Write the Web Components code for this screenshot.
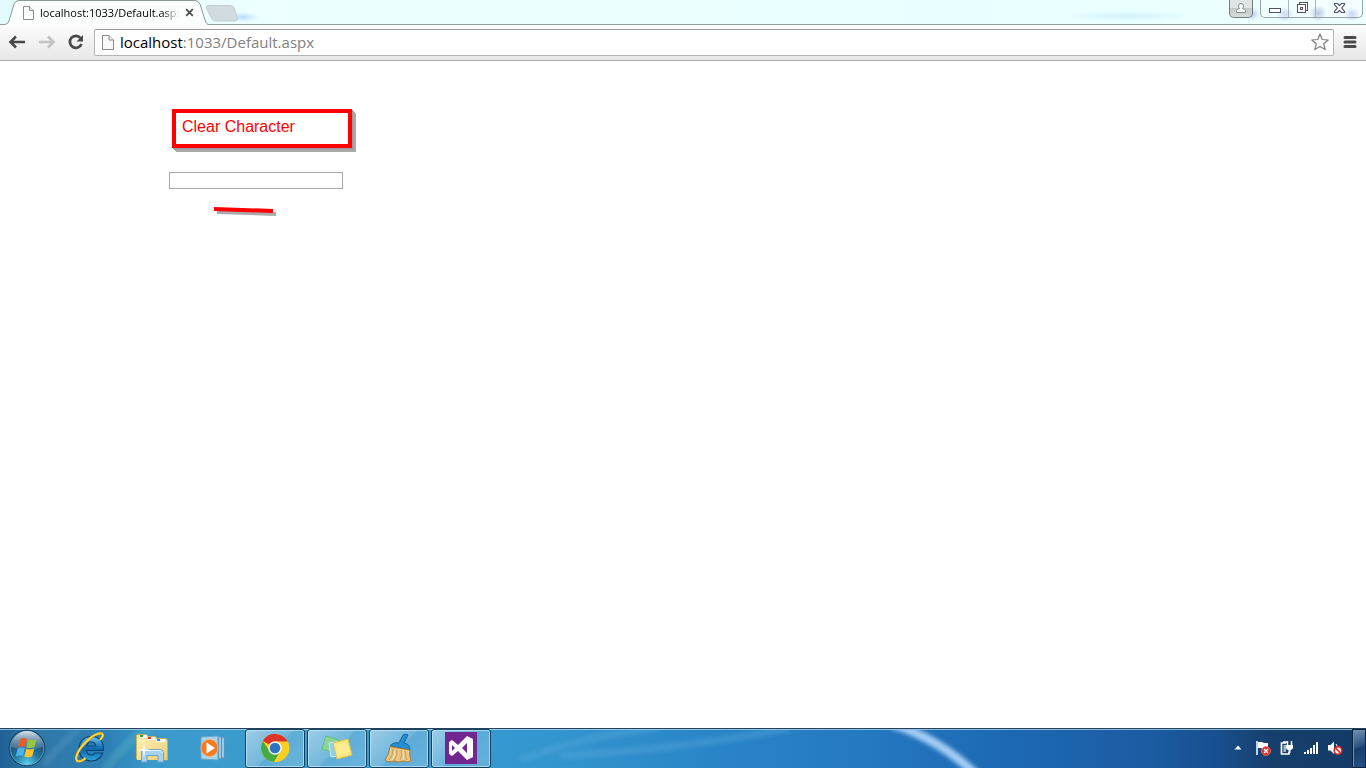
<!DOCTYPE html>
<html lang="en">
<head>
<meta charset="utf-8">
<title>localhost:1033/Default.aspx</title>
<style>
  html, body {
    margin: 0;
    height: 100%;
  }
  body {
    overflow: hidden;
    background: #fff;
    font-family: "Open Sans", "Noto Sans", sans-serif;
  }
</style>
</head>
<body>
<desktop-screen>
  <tab-strip slot="browser">
    <browser-tab>localhost:1033/Default.aspx</browser-tab>
    <window-controls slot="controls"></window-controls>
  </tab-strip>
  <browser-toolbar slot="browser" host="localhost" path=":1033/Default.aspx"></browser-toolbar>
  <web-page slot="page">
    <call-out>Clear Character</call-out>
  </web-page>
  <task-bar slot="taskbar"></task-bar>
</desktop-screen>

<script>
class DesktopScreen extends HTMLElement {
  constructor() {
    super();
    this.attachShadow({ mode: "open" }).innerHTML = `
      <style>
        :host {
          display: flex;
          flex-direction: column;
          height: 100vh;
        }
        main {
          flex: 1;
          min-height: 0;
          background: #fff;
        }
      </style>
      <header><slot name="browser"></slot></header>
      <main><slot name="page"></slot></main>
      <slot name="taskbar"></slot>
    `;
  }
}
customElements.define("desktop-screen", DesktopScreen);

class TabStrip extends HTMLElement {
  constructor() {
    super();
    this.attachShadow({ mode: "open" }).innerHTML = `
      <style>
        :host {
          display: flex;
          align-items: flex-start;
          height: 25px;
          padding-left: 5px;
          box-sizing: border-box;
          background:
            radial-gradient(ellipse 16px 5px at 243px 17px, #b9dcff, transparent),
            radial-gradient(ellipse 8px 7px at 1252px 14px, #b5cdf3, transparent),
            radial-gradient(ellipse 9px 8px at 1285px 14px, #b0c6ee, transparent),
            radial-gradient(ellipse 9px 8px at 1318px 13px, #93a9d8, transparent),
            radial-gradient(ellipse 8px 7px at 1352px 14px, #a6bdea, transparent),
            radial-gradient(ellipse 66px 6px at 1128px 16px, #d3f3fd, transparent),
            linear-gradient(90deg, #e2fafc, #edffff 20%, #e9ffff 70%, #edffff);
          box-shadow: inset 0 -1px #939f9f;
        }
        button {
          padding: 0;
          border: 0;
          margin: 5px 0 0 -3px;
          background: none;
          line-height: 0;
        }
        .controls {
          margin-left: auto;
        }
      </style>
      <slot></slot>
      <button aria-label="New tab">
        <svg width="34" height="17" viewBox="0 0 34 17">
          <path d="M3 .5H25Q28 .5 29 3L32.500 13Q33 16 30 16H11Q8 16 7 14L1.500 3Q1 .5 3 .5Z" fill="#d0dcdf" stroke="#bfcbce"/>
        </svg>
      </button>
      <div class="controls"><slot name="controls"></slot></div>
    `;
  }
}
customElements.define("tab-strip", TabStrip);

class BrowserTab extends HTMLElement {
  constructor() {
    super();
    this.attachShadow({ mode: "open" }).innerHTML = `
      <style>
        :host {
          display: flex;
          align-items: center;
          position: relative;
          width: 203px;
          height: 25px;
          padding: 0 14px 0 18px;
          box-sizing: border-box;
          font-size: 11px;
          color: #000;
        }
        .shape {
          position: absolute;
          left: 0;
          top: 0;
        }
        .icon, .title, button {
          position: relative;
        }
        .title {
          flex: 1;
          min-width: 0;
          margin: 0 6px;
          overflow: hidden;
          white-space: nowrap;
          -webkit-mask-image: linear-gradient(90deg, #000 88%, transparent);
          mask-image: linear-gradient(90deg, #000 88%, transparent);
        }
        button {
          padding: 0;
          border: 0;
          background: none;
          line-height: 0;
        }
      </style>
      <svg class="shape" width="203" height="25" viewBox="0 0 203 25">
        <path d="M0 24.500Q3 24 4 21L9 4Q10.500 .5 14 .5H190Q193 .5 195 4L200 20Q201 24 203 24.500V25H0Z" fill="#fcfdfd"/>
        <path d="M0 24.500Q3 24 4 21L9 4Q10.500 .5 14 .5H190Q193 .5 195 4L200 20Q201 24 203 24.500" fill="none" stroke="#8c9898"/>
      </svg>
      <svg class="icon" width="11" height="14" viewBox="0 0 11 14">
        <path d="M.5 .5H6.500L10.500 4.500V13.500H.5Z" fill="#fdfdfd" stroke="#8b8b8b"/>
        <path d="M6.500 .5V4.500H10.500" fill="#eee" stroke="#8b8b8b"/>
      </svg>
      <span class="title"><slot></slot></span>
      <button aria-label="Close tab">
        <svg width="9" height="9" viewBox="0 0 9 9"><path d="M1.200 1.200L7.800 7.800M7.800 1.200L1.200 7.800" stroke="#4d4d4d" stroke-width="1.800"/></svg>
      </button>
    `;
  }
}
customElements.define("browser-tab", BrowserTab);

class WindowControls extends HTMLElement {
  constructor() {
    super();
    this.attachShadow({ mode: "open" }).innerHTML = `
      <style>
        :host {
          display: flex;
          gap: 7px;
          padding-right: 3px;
        }
        button {
          display: grid;
          place-items: center;
          height: 17px;
          padding: 0 0 2px;
          border: 0;
          background: none;
        }
        .user {
          width: 24px;
          height: 18px;
          border: 1px solid #737b7b;
          border-top: 0;
          border-radius: 0 0 5px 5px;
          background: linear-gradient(#dfe5e4 45%, #c2cac8 50%, #d5dcda);
        }
        .group {
          display: flex;
          border: 1px solid #98a5a7;
          border-top: 0;
          border-radius: 0 0 5px 5px;
          background: rgba(255, 255, 255, .35);
        }
        .group button + button {
          border-left: 1px solid #a9b6b8;
        }
        .min { width: 27px; }
        .max { width: 27px; }
        .close { width: 47px; }
      </style>
      <button class="user" aria-label="User">
        <svg width="12" height="12" viewBox="0 0 12 12">
          <path d="M1.500 10.500V8.500Q2 7 4.500 6.500Q3.500 5.500 3.500 3.800Q3.700 1.500 6 1.500Q8.300 1.500 8.500 3.800Q8.500 5.500 7.500 6.500Q10 7 10.500 8.500V10.500Z" fill="#f7f9f9" stroke="#858c8c"/>
        </svg>
      </button>
      <div class="group">
        <button class="min" aria-label="Minimize">
          <svg width="13" height="13" viewBox="0 0 13 13"><rect x="1.500" y="7.500" width="11" height="4" fill="#fff" stroke="#505468"/></svg>
        </button>
        <button class="max" aria-label="Restore">
          <svg width="13" height="13" viewBox="0 0 13 13" fill="#fff" stroke="#505468">
            <rect x="3.500" y="1.500" width="8" height="8"/>
            <rect x="1.500" y="3.500" width="8" height="8"/>
            <rect x="4.500" y="6.500" width="2" height="2"/>
          </svg>
        </button>
        <button class="close" aria-label="Close">
          <svg width="13" height="12" viewBox="0 0 13 12">
            <path d="M1.500 1.500H4.500L6.500 3.600L8.500 1.500H11.500V2.500L8.700 6L11.500 9.500V10.500H8.500L6.500 8.400L4.500 10.500H1.500V9.500L4.300 6L1.500 2.500Z" fill="#fff" stroke="#505468" stroke-width="1.200"/>
          </svg>
        </button>
      </div>
    `;
  }
}
customElements.define("window-controls", WindowControls);

class BrowserToolbar extends HTMLElement {
  constructor() {
    super();
    this.attachShadow({ mode: "open" });
  }
  connectedCallback() {
    this.shadowRoot.innerHTML = `
      <style>
        :host {
          display: flex;
          align-items: center;
          height: 36px;
          padding: 0 8px 1px;
          box-sizing: border-box;
          border-bottom: 1px solid #a8a8a8;
          background: linear-gradient(#fcfcfc, #e7e7e7);
        }
        button {
          display: grid;
          place-items: center;
          width: 29px;
          height: 26px;
          padding: 0;
          border: 0;
          background: none;
        }
        .back {
          width: 18px;
          margin-right: 6px;
        }
        .omnibox {
          display: flex;
          align-items: center;
          flex: 1;
          height: 27px;
          margin-left: 4px;
          padding: 0 4px 0 7px;
          box-sizing: border-box;
          border: 1px solid #b4b4b4;
          border-top-color: #9c9c9c;
          border-radius: 2px;
          background: #fff;
        }
        .url {
          flex: 1;
          margin-left: 6px;
          font-size: 15px;
          line-height: 20px;
          color: #808080;
          text-decoration: none;
        }
        .url b {
          font-weight: 400;
          color: #000;
        }
        .star {
          width: 18px;
        }
        .menu {
          width: 16px;
          margin-left: 8px;
        }
      </style>
      <button class="back" aria-label="Back">
        <svg width="18" height="16" viewBox="0 0 18 16"><path d="M8 2.500L2.500 8L8 13.500M3 8H17" fill="none" stroke="#484848" stroke-width="2.600"/></svg>
      </button>
      <button aria-label="Forward">
        <svg width="18" height="16" viewBox="0 0 18 16"><path d="M10 2.500L15.500 8L10 13.500M15 8H1" fill="none" stroke="#c3c3c3" stroke-width="2.600"/></svg>
      </button>
      <button aria-label="Reload">
        <svg width="18" height="16" viewBox="0 0 18 16">
          <path d="M13.500 4A6 6 0 1 0 14.500 10" fill="none" stroke="#484848" stroke-width="2.700"/>
          <path d="M16 1V7.500H9.500Z" fill="#484848"/>
        </svg>
      </button>
      <div class="omnibox">
        <svg width="12" height="15" viewBox="0 0 12 15">
          <path d="M.5 .5H7L11.500 5V14.500H.5Z" fill="#fafafa" stroke="#8b8b8b"/>
          <path d="M7 .5V5H11.500" fill="#eee" stroke="#8b8b8b"/>
        </svg>
        <a class="url" href="#"><b>${this.getAttribute("host")}</b>${this.getAttribute("path")}</a>
        <button class="star" aria-label="Bookmark this page">
          <svg width="18" height="18" viewBox="0 0 18 18"><path d="M9 1L11.200 6.500L17.200 7L12.700 10.800L14.200 16.600L9 13.500L3.800 16.600L5.300 10.800L.8 7L6.800 6.500Z" fill="#fff" stroke="#7d7d7d" stroke-width="1.200" stroke-linejoin="round"/></svg>
        </button>
      </div>
      <button class="menu" aria-label="Menu">
        <svg width="14" height="14" viewBox="0 0 14 14"><path d="M2 2.500H12M2 7H12M2 11.500H12" stroke="#4a4a4a" stroke-width="3" stroke-linecap="round"/></svg>
      </button>
    `;
  }
}
customElements.define("browser-toolbar", BrowserToolbar);

class WebPage extends HTMLElement {
  constructor() {
    super();
    this.attachShadow({ mode: "open" }).innerHTML = `
      <style>
        :host {
          display: flex;
          flex-direction: column;
          align-items: flex-start;
          padding: 48px 0 0 169px;
        }
        input {
          width: 174px;
          height: 17px;
          margin: 24px 0 17px;
          padding: 1px 2px;
          box-sizing: border-box;
          border: 1px solid #a9a9a9;
          background: #fff;
          outline: none;
          font: 13px "Liberation Sans", sans-serif;
        }
        .stroke {
          margin-left: 44px;
        }
      </style>
      <slot></slot>
      <input type="text" aria-label="Character">
      <svg class="stroke" width="64" height="12" viewBox="0 0 64 12">
        <path d="M4 6L63 8" stroke="#aaa" stroke-width="4"/>
        <path d="M1 3L60 5" stroke="#f00" stroke-width="4"/>
      </svg>
    `;
  }
}
customElements.define("web-page", WebPage);

class CallOut extends HTMLElement {
  constructor() {
    super();
    this.attachShadow({ mode: "open" }).innerHTML = `
      <style>
        :host {
          display: block;
          width: 180px;
          height: 39px;
          margin-left: 3px;
          padding: 5px 6px;
          box-sizing: border-box;
          border: 4px solid #f00;
          box-shadow: 1px 1px #999, 2px 2px #a5a5a5, 3px 3px #aaa, 4px 4px #aaa;
          background: #fff;
          font: 16px/18px "Liberation Sans", Arial, sans-serif;
          color: #f00;
        }
      </style>
      <slot></slot>
    `;
  }
}
customElements.define("call-out", CallOut);

class TaskBar extends HTMLElement {
  constructor() {
    super();
    this.attachShadow({ mode: "open" }).innerHTML = `
      <style>
        :host {
          display: flex;
          position: relative;
          height: 40px;
          box-sizing: border-box;
          border-top: 1px solid #26435c;
          background: linear-gradient(90deg, #1f6196 0, #2f78a8 3%, #2e81b5 8%, #3a9acb 11%, #3b9dd0 26%, #3496cf 40%, #2a85c7 52%, #2478c0 64%, #1d68b3 74%, #1b5ca3 84%, #18508f 89%, #163f6c 93%, #133a66 100%);
          box-shadow: inset 0 1px rgba(190, 225, 245, .7);
        }
        .sheen {
          position: absolute;
          inset: 1px 0 0;
          width: 100%;
          height: 38px;
        }
        nav, .tray {
          display: flex;
          position: relative;
        }
        button {
          display: grid;
          place-items: center;
          padding: 0 0 2px;
          border: 0;
          background: none;
        }
        .start {
          width: 54px;
          margin-right: 5px;
        }
        .pin {
          width: 62px;
        }
        .app {
          width: 60px;
          margin-right: 2px;
          border: 1px solid #17405e;
          border-radius: 3px;
          background: linear-gradient(135deg, rgba(255, 255, 255, .5), rgba(255, 255, 255, .28) 50%, rgba(255, 255, 255, .18) 51%, rgba(255, 255, 255, .24));
          box-shadow: inset 0 0 0 1px rgba(205, 235, 250, .65);
        }
        .tray {
          margin-left: auto;
          align-items: stretch;
        }
        .tray button {
          width: 24px;
        }
        .tray .arrow {
          width: 26px;
        }
        .tray .desktop {
          width: 14px;
          margin-left: 5px;
          border: 1px solid #0c2340;
          background: linear-gradient(160deg, #7593b3, #2a5280 45%, #183f6d 50%, #245081);
          box-shadow: inset 1px 1px #6d8bad;
        }
      </style>
      <svg class="sheen" viewBox="0 0 1366 38" preserveAspectRatio="none" aria-hidden="true">
        <defs><filter id="soft"><feGaussianBlur stdDeviation="2"/></filter></defs>
        <g fill="none" filter="url(#soft)">
          <path d="M892 -6Q938 8 978 46" stroke="#a3cdf5" stroke-width="9"/>
          <path d="M520 30Q590 4 660 -2M560 26Q690 18 790 -2" stroke="#5aaadc" stroke-width="7" opacity=".4"/>
          <path d="M105 40Q125 12 150 -2" stroke="#5fbcc5" stroke-width="9" opacity=".3"/>
          <path d="M45 34Q62 12 78 0" stroke="#70aace" stroke-width="7" opacity=".25"/>
        </g>
      </svg>
      <nav>
        <button class="start" aria-label="Start">
          <svg width="38" height="38" viewBox="0 0 38 38">
            <defs>
              <radialGradient id="orb" cx=".5" cy=".95" r=".8"><stop offset="0" stop-color="#56d5ef"/><stop offset=".45" stop-color="#23749f"/><stop offset="1" stop-color="#194367"/></radialGradient>
              <linearGradient id="gloss" x2="0" y2="1"><stop offset="0" stop-color="#d7e5ee"/><stop offset="1" stop-color="#668fae" stop-opacity=".4"/></linearGradient>
            </defs>
            <circle cx="19" cy="19" r="17.800" fill="url(#orb)" stroke="#163d5c"/>
            <circle cx="19" cy="19" r="16.800" fill="none" stroke="#79b7cf" opacity=".7"/>
            <path d="M3 18A16 16 0 0 1 35 18Q19 23 3 18Z" fill="url(#gloss)"/>
            <path d="M12 10.500Q15.500 8 19 9.800L17.200 17.800Q13.500 16.300 10 18.500Z" fill="#ed5a24"/>
            <path d="M20.300 10.500Q24 12.300 28.500 10L26.500 18Q22.500 20 18.500 18.300Z" fill="#94c83d"/>
            <path d="M9.700 19.800Q13 17.800 16.800 19.200L15 27Q11.500 25.700 7.700 27.600Z" fill="#4bb1e9"/>
            <path d="M18.200 19.800Q22 21.500 26.200 19.400L24.200 27.200Q20 29.400 16.300 27.600Z" fill="#fdc32f"/>
          </svg>
        </button>
        <button class="pin" aria-label="Internet Explorer">
          <svg width="34" height="34" viewBox="0 0 34 34">
            <defs><linearGradient id="ie" x2="0" y2="1"><stop offset="0" stop-color="#66c9ef"/><stop offset=".5" stop-color="#0f66ab"/><stop offset="1" stop-color="#2fa4dd"/></linearGradient></defs>
            <path d="M30.500 19.500H13.500Q14 24 18 24Q20.600 24 22 22H29.700Q26.500 30 18 30Q6 29 6 17.500Q7 6 18 5.500Q31 6 30.500 19.500ZM13.500 15H22.800Q22 11 18.200 11Q14.500 11 13.500 15Z" fill="url(#ie)" stroke="#0b4274" stroke-width="1.200" fill-rule="evenodd"/>
            <path d="M27 9Q31.500 4 29 2.700Q24 1 15 9Q5 18 3.300 26Q2.500 31.500 8 30Q10.500 29 12.500 27.300" fill="none" stroke="#c58d13" stroke-width="2.600"/>
            <path d="M27 9Q31.500 4 29 2.700Q24 1 15 9Q5 18 3.300 26Q2.500 31.500 8 30Q10.500 29 12.500 27.300" fill="none" stroke="#ffd83d" stroke-width="1.800"/>
          </svg>
        </button>
        <button class="pin" aria-label="Windows Explorer">
          <svg width="34" height="32" viewBox="0 0 34 32">
            <defs><linearGradient id="folder" x2="1" y2="1"><stop offset="0" stop-color="#fff0b5"/><stop offset="1" stop-color="#e8cd73"/></linearGradient></defs>
            <path d="M1.500 27V4Q1.500 2.500 3 2.500H11L13 4.500H20L22 6.500H30Q32.500 6.500 32.500 9V28Z" fill="#f3e09a" stroke="#c9b05c"/>
            <path d="M4 3H12V6H4M13 5H20V8H13M21 7H30V10H21" fill="#fff"/>
            <path d="M5 3H8V5H5Z" fill="#21a52f"/>
            <path d="M13 5H16V7H13Z" fill="#df3e2d"/>
            <path d="M22 7H25V9H22Z" fill="#1c91de"/>
            <path d="M2 7H12L14 9H21L23 11H32V28H2Z" fill="url(#folder)"/>
            <path d="M6.500 30V21Q6.500 17.500 10 17.500H25Q28.500 17.500 28.500 21V30H23V23.500H12V30Z" fill="#a7d3ef" stroke="#6fa3c8"/>
            <path d="M8 19Q9 18.500 11 18.500H25Q27 18.500 27.500 21" fill="none" stroke="#e1f4ff"/>
            <path d="M9 11L10 17L16 18L10 19L9 26L8 19L2 18L8 17Z" fill="#fff"/>
          </svg>
        </button>
        <button class="pin" aria-label="Windows Media Player">
          <svg width="30" height="28" viewBox="0 0 30 28">
            <path d="M2 3L19 2V26L2 25Z" fill="#a9d4ec" stroke="#6aa5c9"/>
            <path d="M20 3L22 2.500V25L20 24ZM23 4L25 3.500V24L23 23.500Z" fill="#c4e5f5" stroke="#629cc0" stroke-width=".8"/>
            <circle cx="10.500" cy="14" r="8.500" fill="#f47b20" stroke="#ffab66"/>
            <path d="M7.500 8.500V19.500L16 14Z" fill="#fff"/>
          </svg>
        </button>
        <button class="app" aria-label="Google Chrome">
          <svg width="30" height="30" viewBox="0 0 30 30">
            <circle cx="15" cy="15" r="14" fill="#f9cf24"/>
            <path d="M15 15L2.900 8A14 14 0 0 1 27.800 9H15Z" fill="#dc3528"/>
            <path d="M15 15L20.500 18L14 29A14 14 0 0 1 2.900 8L9.500 18Z" fill="#44ab3f"/>
            <path d="M15 8.500H27.700A14 14 0 0 1 14 29L20.700 18Z" fill="#f9cf24"/>
            <circle cx="15" cy="15" r="6.700" fill="#f4f7f7"/>
            <circle cx="15" cy="15" r="5.300" fill="#2c72bd"/>
          </svg>
        </button>
        <button class="app" aria-label="Sticky Notes">
          <svg width="34" height="28" viewBox="0 0 34 28">
            <path d="M6 2L19 6L15 19L2 15Z" fill="#8bd495" stroke="#6cbb79"/>
            <path d="M9 9L22 7L24 21L11 23Z" fill="#8dcef2" stroke="#c9e8fa"/>
            <path d="M13 9L28 5L32 21L17 25Z" fill="#fae77c" stroke="#dfc24b"/>
            <path d="M15 11L27 8L30 18L18 22Z" fill="#fff4a1" opacity=".5"/>
          </svg>
        </button>
        <button class="app" aria-label="Cleaner">
          <svg width="32" height="32" viewBox="0 0 32 32">
            <path d="M20 3Q23 1 25 3L21 11Q27 12 27 18L7 14Q10 10 16 11Z" fill="#258fd5" stroke="#16639e"/>
            <path d="M7 14.500L27 18Q26 23 28 29Q24 31 21 29Q15 31 11 29Q5 31 2 28Q6 23 7 14.500Z" fill="#e9c683" stroke="#a67a38"/>
            <path d="M10 17Q10 24 6 28M14 18Q15 24 11 28M18 18Q20 24 17 28M22 19Q22 24 24 28" fill="none" stroke="#bb8f4d" stroke-width=".8"/>
            <path d="M12 18Q12 24 9 28M20 19Q21 24 20 28" fill="none" stroke="#fae2a9"/>
          </svg>
        </button>
        <button class="app" aria-label="Visual Studio">
          <svg width="32" height="32" viewBox="0 0 32 32">
            <rect width="32" height="32" fill="#71278f"/>
            <path d="M22 4L28 7V25L22 28L13 19L7 24L4 22V10L7 8L13 13ZM22 11L17 16L22 21ZM7 13V19L10 16Z" fill="#fff" fill-rule="evenodd"/>
          </svg>
        </button>
      </nav>
      <div class="tray">
        <button class="arrow" aria-label="Show hidden icons">
          <svg width="8" height="5" viewBox="0 0 8 5"><path d="M4 .5L7.500 4.500H.5Z" fill="#fff"/></svg>
        </button>
        <button aria-label="Action Center">
          <svg width="16" height="16" viewBox="0 0 16 16">
            <path d="M2 1V15" stroke="#fff" stroke-width="1.500"/><path d="M3 2H7L9 3H13V9H8L6 8H3Z" fill="#fff"/>
            <circle cx="11" cy="11" r="4.500" fill="#db2929" stroke="#ff8a7b" stroke-width=".7"/>
            <path d="M9 9L13 13M13 9L9 13" stroke="#fff" stroke-width="1.500"/>
          </svg>
        </button>
        <button aria-label="Power">
          <svg width="16" height="16" viewBox="0 0 16 16">
            <path d="M7 3H2.500V14H10V12M4 2H8" fill="none" stroke="#fff" stroke-width="1.700"/>
            <path d="M4.500 5H7V12H4.500Z" fill="#fff" opacity=".65"/>
            <path d="M7 5H14V8Q13 10 11.500 10V13H9.500V10Q7 10 7 7Z" fill="#fff"/>
            <path d="M8.500 1V5M12.500 1V5" stroke="#fff" stroke-width="1.500"/>
          </svg>
        </button>
        <button aria-label="Network">
          <svg width="16" height="14" viewBox="0 0 16 14"><path d="M1 11H3V13H1ZM4 9H6V13H4ZM7 7H9V13H7ZM10 4H12V13H10ZM13 1H15V13H13Z" fill="#fff"/></svg>
        </button>
        <button aria-label="Volume muted">
          <svg width="16" height="16" viewBox="0 0 16 16">
            <path d="M1 5H3.500L7 1.500V14L3.500 10.500H1Z" fill="#fff"/><path d="M9 4Q10.500 6 10 8" fill="none" stroke="#fff"/>
            <circle cx="11" cy="10.500" r="3.800" fill="#fff" stroke="#df2929" stroke-width="1.700"/>
            <path d="M8.500 8L13.500 13" stroke="#df2929" stroke-width="1.700"/>
          </svg>
        </button>
        <button class="desktop" aria-label="Show desktop"></button>
      </div>
    `;
  }
}
customElements.define("task-bar", TaskBar);
</script>
</body>
</html>
